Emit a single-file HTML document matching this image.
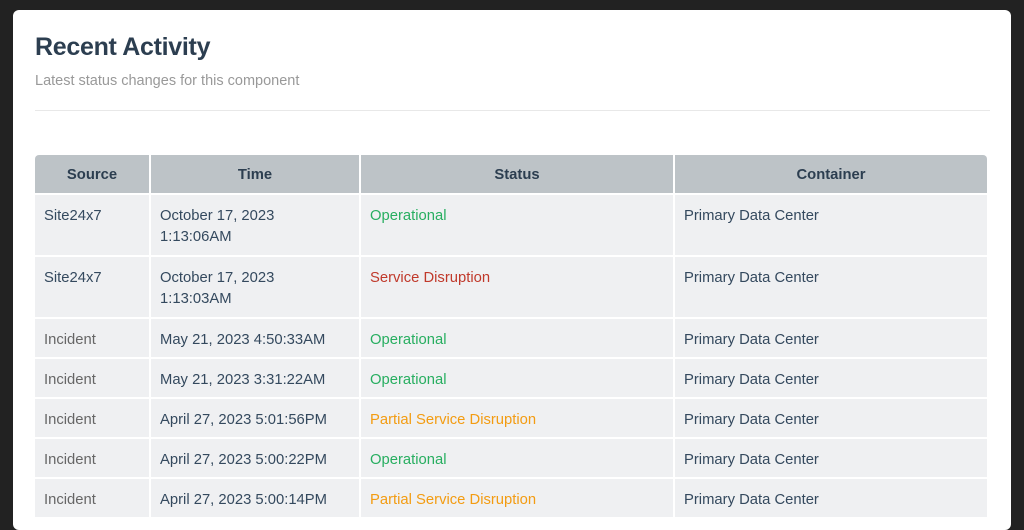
<!DOCTYPE html>
<html><head><style>
body{margin:0;width:1024px;height:518px;background:#222;overflow:hidden;font-family:"Liberation Sans",sans-serif;}
.card{position:absolute;left:13px;top:10px;width:998px;height:520px;background:#fff;border-radius:6px;}
h1{position:absolute;left:22px;top:23px;margin:0;font-size:25px;font-weight:bold;color:#2c3e50;letter-spacing:-0.3px}
.sub{position:absolute;left:22px;top:63px;font-size:14.5px;color:#999}
.hr{position:absolute;left:22px;top:100px;width:955px;height:1px;background:#e8e8e8}
.c{position:absolute;background:#eff0f2;font-size:14.8px;color:#34495e;padding:11px 9px 0;box-sizing:border-box;line-height:21px}
.h{background:#bdc3c7;font-weight:bold;text-align:center;padding:10px 0 0;color:#2c3e50}
.g{color:#27ae60}.r{color:#c0392b}.o{color:#f39c12}
</style></head><body>
<div class="card">
<h1>Recent Activity</h1>
<div class="sub">Latest status changes for this component</div>
<div class="hr"></div>
</div>
<div id="t"></div>
<script>
var cols=[[35,114],[151,208],[361,312],[675,312]];
var rows=[[155,38],[195,60],[257,60],[319,38],[359,38],[399,38],[439,38],[479,38]];
var data=[["Source","Time","Status","Container"],
["Site24x7","October 17, 2023<br>1:13:06AM","<span class=g>Operational</span>","Primary Data Center"],
["Site24x7","October 17, 2023<br>1:13:03AM","<span class=r>Service Disruption</span>","Primary Data Center"],
["Incident","May 21, 2023 4:50:33AM","<span class=g>Operational</span>","Primary Data Center"],
["Incident","May 21, 2023 3:31:22AM","<span class=g>Operational</span>","Primary Data Center"],
["Incident","April 27, 2023 5:01:56PM","<span class=o>Partial Service Disruption</span>","Primary Data Center"],
["Incident","April 27, 2023 5:00:22PM","<span class=g>Operational</span>","Primary Data Center"],
["Incident","April 27, 2023 5:00:14PM","<span class=o>Partial Service Disruption</span>","Primary Data Center"]];
var h="";
rows.forEach(function(r,i){cols.forEach(function(c,j){
var st="left:"+c[0]+"px;top:"+r[0]+"px;width:"+c[1]+"px;height:"+r[1]+"px;";
if(i==0&&j==0)st+="border-top-left-radius:4px;";if(i==0&&j==3)st+="border-top-right-radius:4px;";
var col=(j==0&&i>2)?"color:#666;":"";
h+='<div class="c'+(i==0?' h':'')+'" style="'+st+col+'">'+data[i][j]+'</div>';});});
document.getElementById("t").innerHTML=h;
</script>
</body></html>
